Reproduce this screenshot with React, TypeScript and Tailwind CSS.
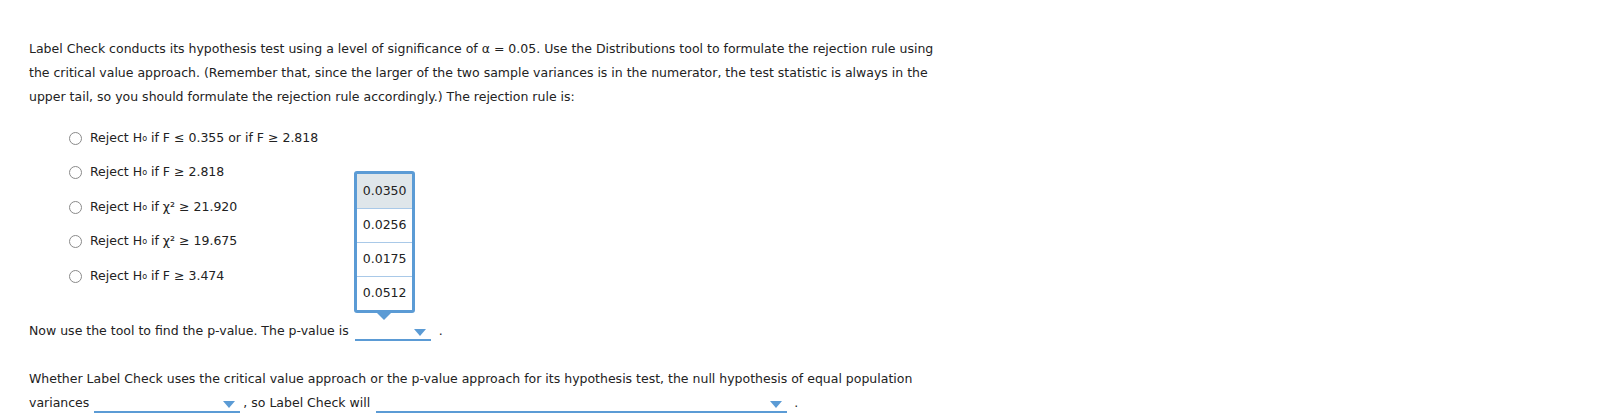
import * as React from "react";

const options = [
  <>Reject H<span className="text-[8px] align-[1px]">o</span> if F ≤ 0.355 or if F ≥ 2.818</>,
  <>Reject H<span className="text-[8px] align-[1px]">o</span> if F ≥ 2.818</>,
  <>Reject H<span className="text-[8px] align-[1px]">o</span> if χ² ≥ 21.920</>,
  <>Reject H<span className="text-[8px] align-[1px]">o</span> if χ² ≥ 19.675</>,
  <>Reject H<span className="text-[8px] align-[1px]">o</span> if F ≥ 3.474</>,
]

const pValues = ["0.0350", "0.0256", "0.0175", "0.0512"]

function Caret() {
  return (
    <svg width="12" height="7" viewBox="0 0 12 7" className="shrink-0">
      <path d="M0 0 L12 0 L6 7 Z" fill="#5b9bd5" />
    </svg>
  )
}

function Select({ className, children }: { className: string; children?: React.ReactNode }) {
  return (
    <span className={`relative inline-flex items-end justify-end h-[18px] border-b-2 border-[#5b9bd5] pr-[5px] pb-[3px] ${className}`}>
      <Caret />
      {children}
    </span>
  )
}

export default function App() {
  const [selected] = React.useState(0)

  return (
    <div className="w-[1600px] h-[419px] bg-white text-[#222] text-[12.5px] leading-[24px] pl-[29px] pt-[37px]" style={{ fontFamily: '"DejaVu Sans", Verdana, sans-serif' }}>
      <p className="whitespace-nowrap">
        Label Check conducts its hypothesis test using a level of significance of α = 0.05. Use the Distributions tool to formulate the rejection rule using
        <br />
        the critical value approach. (Remember that, since the larger of the two sample variances is in the numerator, the test statistic is always in the
        <br />
        upper tail, so you should formulate the rejection rule accordingly.) The rejection rule is:
      </p>

      <div className="flex flex-col mt-[12px] pl-[40px]">
        {options.map((opt, i) => (
          <label key={i} className="flex items-center h-[34.5px] gap-[8px]">
            <span className="w-[13px] h-[13px] rounded-full border-[1.5px] border-[#8a8a8a] bg-white" />
            <span>{opt}</span>
          </label>
        ))}
      </div>

      <div className="mt-[25px] flex items-end h-[24px]">
        <span className="leading-[24px]">Now use the tool to find the p-value. The p-value is</span>
        <Select className="w-[76px] ml-[6px] mb-[2px]">
          <div className="absolute left-[-1px] bottom-[19px] w-[61px]">
            <div className="border-[3px] border-[#5b9bd5] rounded-[3px] bg-white">
              {pValues.map((v, i) => (
                <div key={v} className={`h-[34px] flex items-center pl-[6px] ${i > 0 ? "border-t border-[#a9c9e8]" : ""} ${i === selected ? "bg-[#dfe6ea]" : ""}`}>
                  {v}
                </div>
              ))}
            </div>
            <div className="mx-auto w-0 h-0 border-l-[7px] border-r-[7px] border-t-[7px] border-l-transparent border-r-transparent border-t-[#5b9bd5]" />
          </div>
        </Select>
        <span className="ml-[8px] leading-[24px]">.</span>
      </div>

      <div className="mt-[24px]">
        <p>Whether Label Check uses the critical value approach or the p-value approach for its hypothesis test, the null hypothesis of equal population</p>
        <div className="flex items-end h-[24px]">
          <span>variances</span>
          <Select className="w-[146px] ml-[5px] mb-[2px]" />
          <span className="ml-[3px]">, so Label Check will</span>
          <Select className="w-[411px] ml-[6px] mb-[2px]" />
          <span className="ml-[7px]">.</span>
        </div>
      </div>
    </div>
  )
}
